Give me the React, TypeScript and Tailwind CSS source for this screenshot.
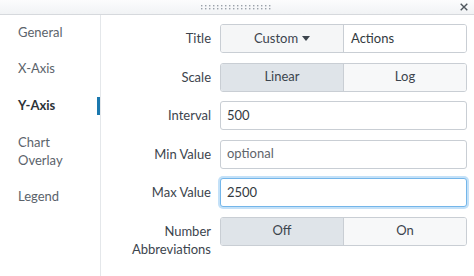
import React from "react";

const font = { fontFamily: "Lato, 'Liberation Sans', sans-serif" };

function Grip() {
  const dots: React.ReactNode[] = [];
  for (let i = 0; i < 18; i++) {
    for (let r = 0; r < 2; r++) {
      dots.push(<rect key={`${i}-${r}`} x={i * 4} y={r * 3} width={1.4} height={1.4} fill="#9aa1a9" />);
    }
  }
  return (
    <svg width="72" height="5" viewBox="0 0 72 5">
      {dots}
    </svg>
  );
}

function Label({ children }: { children: React.ReactNode }) {
  return (
    <div className="w-[110px] text-right text-[13px] leading-[18px] text-[#3c444d] pt-[5px]">
      {children}
    </div>
  );
}

function Row({ label, children }: { label: React.ReactNode; children: React.ReactNode }) {
  return (
    <div className="flex h-[29px] gap-[9px]">
      <Label>{label}</Label>
      <div className="flex-1 flex">{children}</div>
    </div>
  );
}

function Segmented({ items, selected }: { items: string[]; selected: number }) {
  return (
    <div className="flex-1 flex border border-[#c9ced4] rounded-[3px] overflow-hidden">
      {items.map((it, i) => (
        <div
          key={it}
          className={`flex-1 flex items-center justify-center text-[13px] text-[#3c444d] ${
            i === selected ? "bg-[#dfe4e9]" : "bg-[#f7f8f9]"
          } ${i > 0 ? "border-l border-[#c9ced4]" : ""}`}
        >
          {it}
        </div>
      ))}
    </div>
  );
}

function Input({ value, placeholder, focused }: { value?: string; placeholder?: string; focused?: boolean }) {
  return (
    <div
      className={`flex-1 flex items-center px-[6px] rounded-[3px] bg-white text-[13px] ${
        focused
          ? "border border-[#74b6ea] shadow-[0_0_0_2px_#c4e1f8]"
          : "border border-[#c9ced4]"
      }`}
    >
      {value ? (
        <span className="text-[#333a41]">{value}</span>
      ) : (
        <span className="text-[#5f656b]">{placeholder}</span>
      )}
    </div>
  );
}

export default function App() {
  return (
    <div className="w-[474px] h-[276px] bg-white overflow-hidden flex flex-col" style={font}>
      <div className="h-[15px] shrink-0 border-b border-[#d6d9dd] bg-gradient-to-b from-[#fcfcfd] to-[#f1f3f5] relative flex items-center justify-center">
        <div className="ml-[-1px]">
          <Grip />
        </div>
        <svg
          width="8"
          height="8"
          viewBox="0 0 8 8"
          className="absolute right-[6px] top-[3px]"
        >
          <path d="M0.7 0.7 L7.3 7.3 M7.3 0.7 L0.7 7.3" stroke="#4f565d" strokeWidth="1.4" />
        </svg>
      </div>
      <div className="flex flex-1">
        <div className="w-[101px] shrink-0 border-r border-[#e4e7ea] text-[13px] text-[#5b636b] pl-[18px]">
          <div className="h-[35px] flex items-center">General</div>
          <div className="h-[37px] flex items-center">X-Axis</div>
          <div className="h-[37px] flex items-center font-bold text-[#2d3338] relative">
            Y-Axis
            <div className="absolute right-0 top-[10px] w-[3px] h-[18px] bg-[#1b78ae]" />
          </div>
          <div className="h-[54px] flex items-center leading-[18px]">
            Chart
            <br />
            Overlay
          </div>
          <div className="h-[37px] flex items-center">Legend</div>
        </div>
        <div className="flex-1 flex flex-col gap-[9.5px] pt-[9px] pr-[7px]">
          <Row label="Title">
            <div className="flex-1 flex border border-[#c9ced4] rounded-[3px] overflow-hidden">
              <div className="w-[123px] bg-[#f5f6f7] flex items-center justify-center text-[13px] text-[#3c444d] border-r border-[#c9ced4]">
                Custom
                <svg width="8" height="5" viewBox="0 0 8 5" className="ml-[4px]">
                  <path d="M0 0 L8 0 L4 5 Z" fill="#3c444d" />
                </svg>
              </div>
              <div className="flex-1 bg-white flex items-center pl-[7px] text-[13px] text-[#333a41]">Actions</div>
            </div>
          </Row>
          <Row label="Scale">
            <Segmented items={["Linear", "Log"]} selected={0} />
          </Row>
          <Row label="Interval">
            <Input value="500" />
          </Row>
          <Row label="Min Value">
            <Input placeholder="optional" />
          </Row>
          <Row label="Max Value">
            <Input value="2500" focused />
          </Row>
          <Row
            label={
              <span>
                Number
                <br />
                Abbreviations
              </span>
            }
          >
            <Segmented items={["Off", "On"]} selected={0} />
          </Row>
        </div>
      </div>
    </div>
  );
}
